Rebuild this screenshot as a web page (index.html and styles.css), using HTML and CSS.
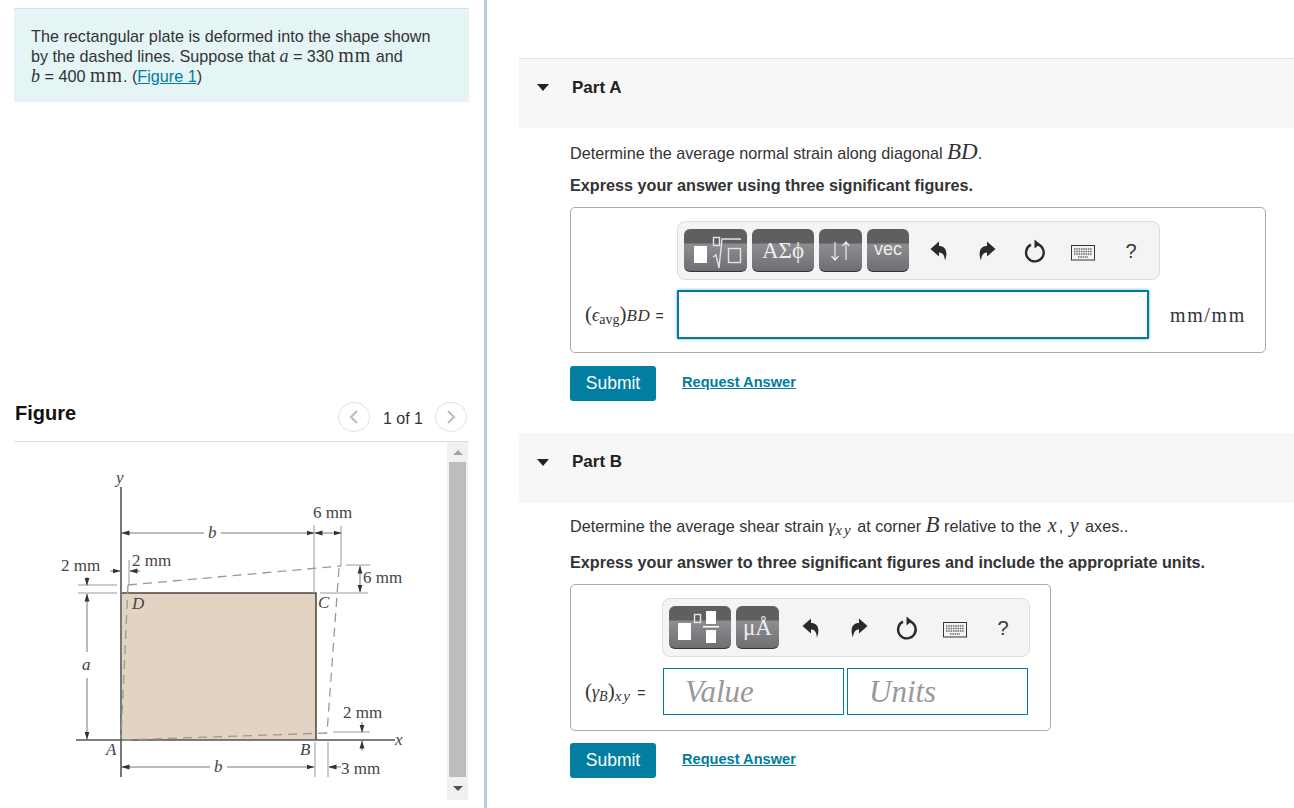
FILE: index.html
```html
<!DOCTYPE html>
<html lang="en">
<head>
    <meta charset="UTF-8">
    <title>Rectangular Plate Strain</title>
    <link rel="stylesheet" href="styles.css">
</head>
<body>

<svg class="icon-defs" width="0" height="0">
    <defs>
        <symbol id="icon-undo" viewBox="0 0 18 20">
            <path d="M0.5 8 L9 0.5 V5 C15 5 18.5 10 15 19.5 C14.5 14 12.5 11.5 9 11.5 V15.5 Z"/>
        </symbol>
        <symbol id="icon-redo" viewBox="0 0 18 20">
            <path d="M17.5 8 L9 0.5 V5 C3 5 -0.5 10 3 19.5 C3.5 14 5.5 11.5 9 11.5 V15.5 Z"/>
        </symbol>
        <symbol id="icon-reset" viewBox="0 0 22 24">
            <path class="reset-ring" d="M13.5 5.2 A8.8 8.8 0 1 1 7 5.7"/>
            <path d="M10.5 0.5 L16 5 L10.5 9.5 Z"/>
        </symbol>
        <symbol id="icon-keyboard" viewBox="0 0 24 16">
            <rect class="kb-body" x="0.5" y="0.5" width="23" height="14.5"/>
            <path class="kb-keys" d="M3 4 H21 M3 6.5 H21 M3 9 H21 M7 12 H17"/>
        </symbol>
        <marker id="tip" viewBox="0 0 8 6" refX="7.5" refY="3" markerWidth="8" markerHeight="6" markerUnits="userSpaceOnUse" orient="auto-start-reverse">
            <path d="M0 0.5 L8 3 L0 5.5 Z" fill="#333"/>
        </marker>
    </defs>
</svg>

<div class="page">
    <div class="left-pane">
        <div class="intro">
            The rectangular plate is deformed into the shape shown<br>
            by the dashed lines. Suppose that <span class="mi">a</span> = 330 <span class="mn">mm</span> and<br>
            <span class="mi">b</span> = 400 <span class="mn">mm</span>. (<a href="#">Figure 1</a>)
        </div>

        <div class="figure-head">
            <h2>Figure</h2>
            <div class="pager">
                <span class="pager-btn">
                    <svg width="10" height="16" viewBox="0 0 10 16"><path d="M8 2 L2 8 L8 14"/></svg>
                </span>
                <span class="pager-text">1 of 1</span>
                <span class="pager-btn">
                    <svg width="10" height="16" viewBox="0 0 10 16"><path d="M2 2 L8 8 L2 14"/></svg>
                </span>
            </div>
        </div>

        <div class="figure-panel">
            <svg class="diagram" width="433" height="358" viewBox="14 442 433 358">
                <rect class="plate" x="121" y="593" width="195" height="147"/>
                <path class="edge" d="M121 593 H316 V740"/>

                <path class="axis" d="M121 487 V777"/>
                <path class="axis-x" d="M76 740 H395"/>

                <path class="dash" d="M128 585 L341 566"/>
                <path class="dash" d="M339 568 L327 733"/>
                <path class="dash" d="M327 733 L122 740"/>
                <path class="dash" d="M128 585 L121 738"/>

                <path class="ext" d="M314 525 V593 M341 526 V566 M129 560 V585"/>
                <path class="ext" d="M78 585 H117 M78 593 H117"/>
                <path class="ext" d="M346 565 H370 M320 593 H368"/>
                <path class="ext" d="M333 732 H370 M315 742 V777 M328 742 V777"/>

                <path class="dim" marker-start="url(#tip)" d="M122 533 H204"/>
                <path class="dim" marker-end="url(#tip)" d="M221 533 H314"/>
                <path class="dim" marker-start="url(#tip)" marker-end="url(#tip)" d="M315 533 H341"/>
                <path class="dim" marker-end="url(#tip)" d="M110 571 H120"/>
                <path class="dim" marker-start="url(#tip)" d="M130 571 H140"/>
                <path class="dim" marker-end="url(#tip)" d="M87 577 V585"/>
                <path class="dim" marker-start="url(#tip)" d="M87 594 V652"/>
                <path class="dim" marker-end="url(#tip)" d="M87 678 V739"/>
                <path class="dim" marker-start="url(#tip)" marker-end="url(#tip)" d="M360 566 V592"/>
                <path class="dim" marker-end="url(#tip)" d="M362 722 V732"/>
                <path class="dim" marker-start="url(#tip)" d="M362 741 V751"/>
                <path class="dim" marker-start="url(#tip)" d="M122 767 H210"/>
                <path class="dim" marker-end="url(#tip)" d="M227 767 H314"/>
                <path class="dim" marker-start="url(#tip)" d="M329 767 H341"/>

                <text class="lbl" x="61" y="571">2 mm</text>
                <text class="lbl" x="132" y="566">2 mm</text>
                <text class="lbl" x="313" y="518">6 mm</text>
                <text class="lbl" x="363" y="583">6 mm</text>
                <text class="lbl" x="343" y="718">2 mm</text>
                <text class="lbl" x="341" y="774">3 mm</text>
                <text class="lbl-i" x="116" y="483">y</text>
                <text class="lbl-i" x="208" y="538">b</text>
                <text class="lbl-i" x="82" y="670">a</text>
                <text class="lbl-i" x="214" y="772">b</text>
                <text class="lbl-i" x="395" y="745">x</text>
                <text class="lbl-i" x="106" y="755">A</text>
                <text class="lbl-i" x="300" y="755">B</text>
                <text class="lbl-i" x="132" y="609">D</text>
                <text class="lbl-i" x="318" y="608">C</text>
            </svg>
            <div class="scrollbar">
                <span class="scroll-up"></span>
                <span class="scroll-thumb"></span>
                <span class="scroll-down"></span>
            </div>
        </div>
    </div>

    <div class="right-pane">
        <div class="part-head">
            <span class="caret"></span>
            <span class="part-title">Part A</span>
        </div>
        <div class="part-body part-a">
            <p class="prompt">Determine the average normal strain along diagonal <span class="mi big">BD</span>.</p>
            <p class="instr">Express your answer using three significant figures.</p>
            <div class="answer-box">
                <div class="toolbar toolbar-a">
                    <span class="tb-btn w-63">
                        <svg width="63" height="43" viewBox="0 0 63 43">
                            <rect class="sq-fill" x="10" y="17" width="13" height="17"/>
                            <rect class="sq-line" x="29.5" y="8.5" width="6" height="8"/>
                            <path class="sq-line" d="M29 28 L32 26 L35 39 L38 10 H57"/>
                            <rect class="sq-line" x="44.5" y="19.5" width="12" height="14"/>
                        </svg>
                    </span>
                    <span class="tb-btn w-62 serif">ΑΣϕ</span>
                    <span class="tb-btn w-43">
                        <svg width="43" height="43" viewBox="0 0 43 43">
                            <path class="arrow-line" d="M16 13 V31 M12.5 27 L16 31 L19.5 27 M27 31 V13 M23.5 17 L27 13 L30.5 17"/>
                        </svg>
                    </span>
                    <span class="tb-btn w-42 sans">vec</span>
                    <div class="tools tools-a">
                        <span class="tool"><svg class="ic-undo"><use href="#icon-undo"/></svg></span>
                        <span class="tool"><svg class="ic-undo"><use href="#icon-redo"/></svg></span>
                        <span class="tool"><svg class="ic-reset"><use href="#icon-reset"/></svg></span>
                        <span class="tool"><svg class="ic-kb"><use href="#icon-keyboard"/></svg></span>
                        <span class="tool help">?</span>
                    </div>
                </div>
                <div class="answer-row row-a">
                    <span class="math-label label-a">(<span class="mi">ϵ</span><sub class="mn">avg</sub>)<span class="mi small">BD</span> <span class="eq">=</span></span>
                    <input class="answer-input" type="text">
                    <span class="unit mn">mm/mm</span>
                </div>
            </div>
            <div class="actions">
                <button class="submit-btn">Submit</button>
                <a class="request" href="#">Request Answer</a>
            </div>
        </div>

        <div class="part-head part-b-head">
            <span class="caret"></span>
            <span class="part-title">Part B</span>
        </div>
        <div class="part-body part-b">
            <p class="prompt">Determine the average shear strain <span class="mi">γ</span><sub class="mi xy">xy</sub> at corner <span class="mi big">B</span> relative to the <span class="mi wide">x</span>, <span class="mi wide">y</span> axes..</p>
            <p class="instr">Express your answer to three significant figures and include the appropriate units.</p>
            <div class="answer-box">
                <div class="toolbar toolbar-b">
                    <span class="tb-btn w-62">
                        <svg width="62" height="43" viewBox="0 0 62 43">
                            <rect class="sq-fill" x="9" y="17" width="13" height="17"/>
                            <rect class="sq-line" x="25.5" y="8.5" width="6" height="8"/>
                            <rect class="sq-fill" x="37" y="5" width="10" height="13"/>
                            <rect class="sq-fill" x="34" y="20" width="16" height="1.5"/>
                            <rect class="sq-fill" x="37" y="24" width="10" height="13"/>
                        </svg>
                    </span>
                    <span class="tb-btn w-43 serif">μÅ</span>
                    <div class="tools tools-b">
                        <span class="tool"><svg class="ic-undo"><use href="#icon-undo"/></svg></span>
                        <span class="tool"><svg class="ic-undo"><use href="#icon-redo"/></svg></span>
                        <span class="tool"><svg class="ic-reset"><use href="#icon-reset"/></svg></span>
                        <span class="tool"><svg class="ic-kb"><use href="#icon-keyboard"/></svg></span>
                        <span class="tool help">?</span>
                    </div>
                </div>
                <div class="answer-row row-b">
                    <span class="math-label label-b">(<span class="mi">γ</span><sub class="mi">B</sub>)<sub class="mi xy">xy</sub> <span class="eq">=</span></span>
                    <input class="value-input" type="text" placeholder="Value">
                    <input class="value-input" type="text" placeholder="Units">
                </div>
            </div>
            <div class="actions">
                <button class="submit-btn">Submit</button>
                <a class="request" href="#">Request Answer</a>
            </div>
        </div>
    </div>
</div>

</body>
</html>
```

FILE: styles.css
```css
html, body {
    margin: 0;
    height: 808px;
    overflow: hidden;
}
body {
    font-family: "Liberation Sans", Arial, sans-serif;
    font-size: 16.2px;
    line-height: 20px;
    color: #333;
    background: #fff;
}
.icon-defs {
    position: absolute;
}
.page {
    display: flex;
    height: 808px;
}
.mi, .mn {
    font-family: "Liberation Serif", serif;
    font-size: 18px;
    line-height: 0;
}
.mi {
    font-style: italic;
}
.mn {
    font-size: 20px;
    letter-spacing: 0.9px;
}
.big {
    font-size: 23px;
}
.small {
    font-size: 17px;
    letter-spacing: 0.6px;
}
.wide {
    font-size: 20px;
    margin: 0 2px;
}
sub.mi, sub.mn {
    font-size: 14px;
    letter-spacing: 0;
    line-height: 0;
    vertical-align: -3px;
}
sub.xy {
    font-size: 15px;
    letter-spacing: 2px;
}

/* left side */
.left-pane {
    width: 455px;
    flex: none;
    padding: 8px 15px 0 14px;
    border-right: 3px solid #b9cde0;
}
.intro {
    height: 60px;
    padding: 17px 0 16px 17px;
    background: #e5f5f6;
    border-top: 1px solid #ddd;
}
.intro a {
    color: #007c9c;
}
.figure-head {
    display: flex;
    justify-content: space-between;
    align-items: center;
    height: 40px;
    margin-top: 299px;
    padding-left: 1px;
    border-bottom: 1px solid #ddd;
}
.figure-head h2 {
    margin: 0 0 16px;
    font-size: 20px;
    color: #111;
}
.pager {
    display: flex;
    align-items: center;
    margin-right: 2px;
    margin-bottom: 8px;
}
.pager-btn {
    display: flex;
    align-items: center;
    justify-content: center;
    width: 30px;
    height: 28px;
    border: 1px solid #e2e2e2;
    border-radius: 50%;
}
.pager-btn path {
    fill: none;
    stroke: #aebfd0;
    stroke-width: 2;
}
.pager-text {
    margin: 4px 12px 0 13px;
    font-size: 16px;
}
.figure-panel {
    display: flex;
    width: 454px;
    height: 358px;
}
.diagram {
    display: block;
    flex: none;
}
.plate {
    fill: #e2d3c2;
}
.edge {
    fill: none;
    stroke: #4a4540;
    stroke-width: 1.5;
}
.axis {
    stroke: #777;
    stroke-width: 2;
}
.axis-x {
    stroke: #555;
    stroke-width: 1.5;
}
.dash {
    fill: none;
    stroke: #999;
    stroke-width: 1.3;
    stroke-dasharray: 9 6;
}
.ext {
    fill: none;
    stroke: #999;
    stroke-width: 1;
}
.dim {
    fill: none;
    stroke: #777;
    stroke-width: 1;
}
.lbl {
    font-family: "Liberation Serif", serif;
    font-size: 17px;
    fill: #444;
}
.lbl-i {
    font-family: "Liberation Serif", serif;
    font-style: italic;
    font-size: 17px;
    fill: #444;
}
.scrollbar {
    display: flex;
    flex-direction: column;
    align-items: center;
    width: 21px;
    background: #f1f1f1;
}
.scroll-up, .scroll-down {
    flex: none;
    width: 0;
    border-left: 5px solid transparent;
    border-right: 5px solid transparent;
}
.scroll-up {
    margin: 8px 0 7px;
    border-bottom: 5px solid #a3a3a3;
}
.scroll-down {
    margin: 9px 0;
    border-top: 5px solid #505050;
}
.scroll-thumb {
    flex: 1;
    width: 17px;
    background: #bdbdbd;
}

/* right side */
.right-pane {
    flex: 1;
    padding: 58px 0 0 32px;
}
.part-head {
    display: flex;
    align-items: center;
    height: 57px;
    padding-bottom: 12px;
    padding-left: 18px;
    background: #f7f7f7;
    border-top: 1px solid #e4e4e4;
}
.part-b-head {
    border-top: none;
    height: 58px;
}
.caret {
    width: 0;
    border-left: 6.5px solid transparent;
    border-right: 6.5px solid transparent;
    border-top: 7px solid #222;
    margin-right: 23px;
}
.part-title {
    font-size: 17px;
    font-weight: bold;
    color: #222;
}
.part-body {
    padding-left: 51px;
    margin-bottom: 32px;
    width: 696px;
}
.part-body p {
    margin: 0;
}
.part-a .prompt {
    margin-top: 15px;
}
.part-a .instr {
    margin-top: 12px;
}
.part-b .prompt {
    margin-top: 13px;
}
.part-b .instr {
    margin-top: 16px;
    white-space: nowrap;
}
.instr {
    font-weight: bold;
}
.answer-box {
    margin-top: 12px;
    padding-top: 13px;
    box-sizing: border-box;
    border: 1px solid #aaa;
    border-radius: 5px;
}
.part-a .answer-box {
    height: 146px;
}
.part-b .answer-box {
    width: 481px;
    height: 147px;
}
.toolbar {
    display: inline-flex;
    box-sizing: border-box;
    height: 59px;
    padding: 7px 6px;
    gap: 5px;
    background: #f4f4f4;
    border: 1px solid #ddd;
    border-radius: 8px;
}
.toolbar-a {
    margin-left: 106px;
}
.toolbar-b {
    margin-left: 91px;
}
.tb-btn {
    display: flex;
    align-items: center;
    justify-content: center;
    box-sizing: border-box;
    height: 43px;
    padding-top: 2px;
    color: #eee;
    background: linear-gradient(#5f5f5f 0, #5f5f5f 14px, #8d8d92 15px, #6f6f73 100%);
    border-bottom: 1px solid #333;
    border-radius: 6px;
}
.tb-btn svg {
    display: block;
    margin-top: -2px;
}
.w-63 { width: 63px; }
.w-62 { width: 62px; }
.w-43 { width: 43px; }
.w-42 { width: 42px; }
.serif {
    font-family: "Liberation Serif", serif;
    font-size: 23px;
}
.sans {
    font-size: 18px;
    padding-bottom: 4px;
}
.sq-fill {
    fill: #fff;
}
.sq-line {
    fill: none;
    stroke: #e4e4e4;
    stroke-width: 1.4;
}
.arrow-line {
    fill: none;
    stroke: #eee;
    stroke-width: 1.2;
}
.tools {
    display: flex;
    align-items: center;
}
.tools-a {
    margin: 0 -2px 0 1px;
}
.tools-b {
    margin: 0 -4px 0 3px;
}
.tool {
    display: flex;
    align-items: center;
    justify-content: center;
    width: 48px;
    height: 43px;
}
.tool svg {
    fill: #2a2a2a;
}
.ic-undo {
    width: 18px;
    height: 20px;
}
.ic-reset {
    width: 22px;
    height: 24px;
}
.ic-kb {
    width: 24px;
    height: 16px;
    margin-top: 5px;
}
.reset-ring {
    fill: none;
    stroke: #2a2a2a;
    stroke-width: 2.4;
}
.kb-body {
    fill: #f4f4f4;
    stroke: #333;
    stroke-width: 1;
}
.kb-keys {
    fill: none;
    stroke: #666;
    stroke-width: 1.5;
    stroke-dasharray: 1.5 0.8;
}
.help {
    font-size: 20px;
    color: #333;
}
.answer-row {
    display: flex;
    align-items: center;
}
.row-a {
    margin-top: 10px;
}
.row-b {
    margin-top: 11px;
}
.math-label {
    flex: none;
    box-sizing: border-box;
    font-family: "Liberation Serif", serif;
    font-size: 21px;
    white-space: nowrap;
}
.label-a {
    width: 106px;
    padding-left: 14px;
}
.label-b {
    width: 92px;
    padding-left: 14px;
}
.eq {
    font-family: "Liberation Sans", sans-serif;
    font-size: 14px;
}
.answer-input {
    box-sizing: border-box;
    width: 472px;
    height: 49px;
    border: 2px solid #007c9c;
    border-radius: 1px;
    box-shadow: 0 0 3px #5aaac0;
    outline: none;
}
.unit {
    margin-left: 21px;
    letter-spacing: 1.6px;
}
.value-input {
    box-sizing: border-box;
    width: 181px;
    height: 47px;
    margin-right: 3px;
    padding: 0 21px;
    border: 1px solid #007c9c;
    border-radius: 0;
    outline: none;
    font-family: "Liberation Serif", serif;
    font-style: italic;
    font-size: 31px;
}
.value-input::placeholder {
    color: #999;
    opacity: 1;
}
.actions {
    display: flex;
    align-items: center;
}
.part-a .actions {
    margin-top: 13px;
}
.part-b .actions {
    margin-top: 12px;
}
.submit-btn {
    width: 86px;
    height: 35px;
    padding: 0;
    font-family: inherit;
    font-size: 17.5px;
    color: #fff;
    background-color: #027ea0;
    border: none;
    border-radius: 3px;
}
.request {
    margin-left: 26px;
    padding-bottom: 3px;
    font-size: 14.6px;
    font-weight: bold;
    color: #007c9c;
}
```
